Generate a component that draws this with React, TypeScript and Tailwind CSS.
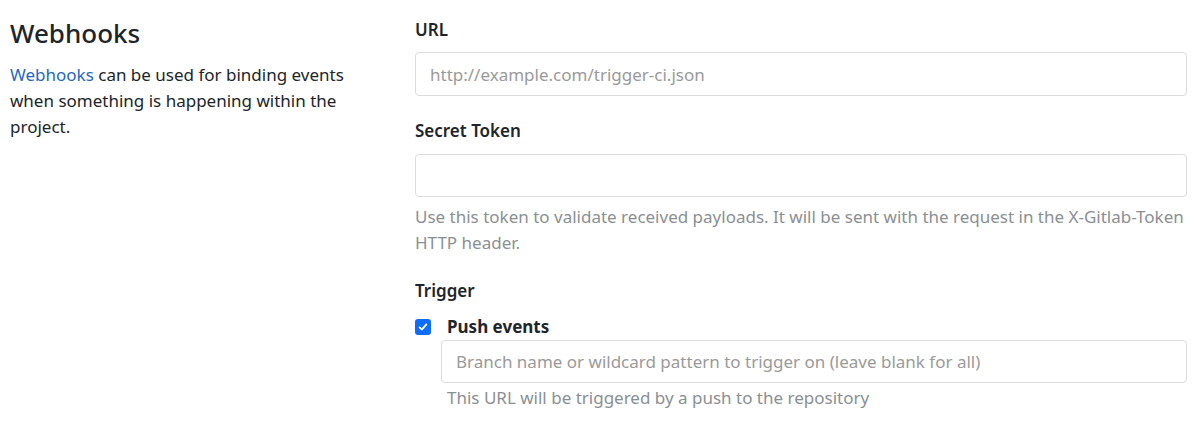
import { useState } from 'react'

export default function App() {
  const [push, setPush] = useState(true)
  return (
    <div className="w-[1200px] h-[421px] bg-white text-[#212529] font-['Noto_Sans',sans-serif] text-[17px] leading-[26px] overflow-hidden">
      <div className="flex pl-[10px] pr-[13px]">
        <div className="w-[375px] shrink-0 pt-[17px]">
          <h4 className="text-[26px] leading-[32px] font-medium">Webhooks</h4>
          <p className="mt-[13px] pr-[20px]">
            <a href="#" className="text-[#1f68c3]">Webhooks</a> can be used for binding events when something is happening within the project.
          </p>
        </div>
        <form className="flex-1 ml-[30px] pt-[17px]">
          <label className="block font-semibold">URL</label>
          <input
            type="text"
            placeholder="http://example.com/trigger-ci.json"
            className="mt-[9px] w-full h-[44px] px-[14px] border border-[#dcdcdc] rounded-[4px] placeholder:text-[#9a9a9a] focus:outline-none"
          />
          <label className="block font-semibold mt-[22px]">Secret Token</label>
          <input
            type="text"
            className="mt-[10px] w-full h-[43px] px-[14px] border border-[#dcdcdc] rounded-[4px] focus:outline-none"
          />
          <p className="mt-[7px] text-[#8a8f94]">
            Use this token to validate received payloads. It will be sent with the request in the X-Gitlab-Token HTTP header.
          </p>
          <label className="block font-semibold mt-[22px]">Trigger</label>
          <div className="flex items-center h-[26px] mt-[10px]">
            <button
              type="button"
              onClick={() => setPush((p) => !p)}
              className={`w-[16px] h-[16px] rounded-[3px] flex items-center justify-center ${push ? 'bg-[#0d6efd]' : 'border border-[#adb5bd] bg-white'}`}
              aria-label="Push events"
            >
              {push && (
                <svg viewBox="0 0 16 16" className="w-[12px] h-[12px]" fill="none" stroke="white" strokeWidth={2.4} strokeLinecap="round" strokeLinejoin="round">
                  <path d="M3.5 8.5l3 3 6-7" />
                </svg>
              )}
            </button>
            <span className="ml-[16px] font-bold">Push events</span>
          </div>
          <div className="ml-[26px]">
            <input
              type="text"
              placeholder="Branch name or wildcard pattern to trigger on (leave blank for all)"
              className="w-full h-[43px] px-[14px] border border-[#dcdcdc] rounded-[4px] placeholder:text-[#9a9a9a] focus:outline-none"
            />
            <p className="mt-[2px] pl-[6px] text-[#8a8f94]">This URL will be triggered by a push to the repository</p>
          </div>
        </form>
      </div>
    </div>
  )
}
